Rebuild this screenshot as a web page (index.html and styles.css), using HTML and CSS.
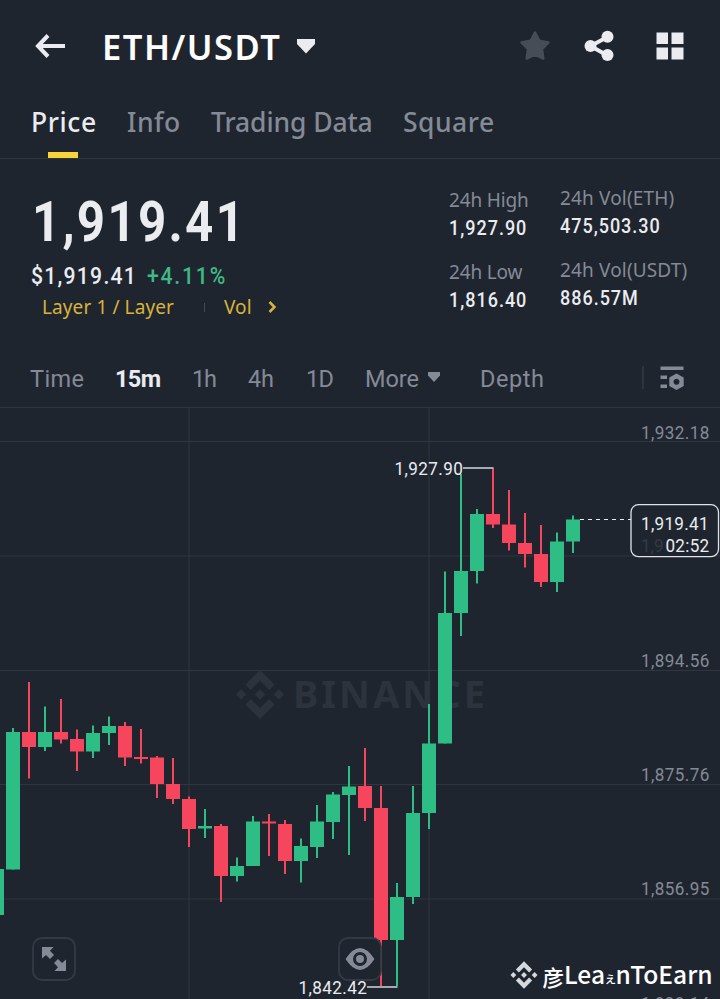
FILE: index.html
```html
<!DOCTYPE html>
<html lang="en">
<head>
<meta charset="utf-8">
<title>ETH/USDT</title>
<link rel="stylesheet" href="styles.css">
</head>
<body>
<header class="topbar">
  <svg class="back" width="32" height="28" viewBox="0 0 32 28"><path d="M14 3.500L4 14l10 10.500M4 14h27" fill="none" stroke="#eaecf2" stroke-width="4"/></svg>
  <h1 class="pair">ETH/USDT</h1>
  <svg class="caret" width="18" height="15" viewBox="0 0 18 15"><path d="M0 0h18v5L9 14.500 0 5z" fill="#eaecf2"/></svg>
  <svg class="star" width="32" height="32" viewBox="0 0 32 32"><path d="M16 2.500l4.300 8.300 9.200 1.600-6.500 6.700 1.300 9.400L16 24.500l-8.300 4 1.300-9.400-6.500-6.700 9.200-1.600z" fill="#474d57" stroke="#474d57" stroke-width="2.500" stroke-linejoin="round"/></svg>
  <svg class="share" width="32" height="32" viewBox="0 0 32 32"><path d="M24.500 7L7.500 16l17 9.500" fill="none" stroke="#eaecf2" stroke-width="4"/><g fill="#eaecf2"><circle cx="24.500" cy="6.800" r="6"/><circle cx="7.500" cy="16" r="6"/><circle cx="24.500" cy="25" r="6"/></g></svg>
  <svg class="apps" width="28" height="28" viewBox="0 0 28 28"><path d="M.5.500H12V12H.500zM15.500.500H27.500V12H15.500zM.500 15.500H12V27.500H.500zM15.500 15.500H27.500V27.500H15.500z" fill="#eaecf2"/></svg>
</header>

<nav class="tabs">
  <a class="tab active t-price">Price</a>
  <a class="tab t-info">Info</a>
  <a class="tab t-data">Trading Data</a>
  <a class="tab t-square">Square</a>
</nav>

<section class="summary">
  <div class="quote">
    <div class="last">1,919.41</div>
    <div class="sub"><span class="usd">$1,919.41</span><span class="chg">+4.11%</span></div>
    <div class="tags">
      <span class="layer">Layer 1 / Layer</span><i class="tag-sep"></i><span class="vol">Vol</span>
      <svg width="9" height="12" viewBox="0 0 9 12"><path d="M1.500 1l5 5-5 5" fill="none" stroke="#d9b23c" stroke-width="2.500"/></svg>
    </div>
  </div>
  <dl class="stats range">
    <div><dt>24h High</dt><dd>1,927.90</dd></div>
    <div><dt>24h Low</dt><dd>1,816.40</dd></div>
  </dl>
  <dl class="stats volume">
    <div><dt>24h Vol(ETH)</dt><dd>475,503.30</dd></div>
    <div><dt>24h Vol(USDT)</dt><dd>886.57M</dd></div>
  </dl>
</section>

<nav class="intervals">
  <svg width="720" height="50" viewBox="0 0 720 50">
    <g class="iv">
      <text x="30" y="29" textLength="54">Time</text>
      <text x="115" y="29" textLength="46" class="on">15m</text>
      <text x="192" y="29" textLength="25">1h</text>
      <text x="248" y="29" textLength="26">4h</text>
      <text x="306" y="29" textLength="28">1D</text>
      <text x="365" y="29" textLength="54">More</text>
      <text x="480" y="29" textLength="64">Depth</text>
    </g>
    <path d="M428 14h12v3.500l-6 6.500-6-6.500z" fill="#848a96"/>
    <path d="M643 8v23" stroke="#343b46" stroke-width="1.500"/>
    <g fill="#848a96"><path d="M660.500 8.500h23v3.500h-23zM660.500 17.500h6.500v3.500h-6.500zM660.500 26.500h6.500v3.500h-6.500z"/><path fill-rule="evenodd" d="M676.500 15.500l7.200 4v8.500l-7.200 4-7.200-4v-8.500zM676.500 20.700a3 3 0 1 0 .01 0z"/></g>
  </svg>
</nav>

<main class="chart">
  <svg id="plot" width="720" height="592" viewBox="0 407 720 592">
    <path class="grid" d="M0 407.500H720M0 441.500H720M0 556H720M0 670.500H720M0 784.500H720M0 899H720M189 407V999M429 407V999"/>
    <g fill="#2c333d">
      <path transform="translate(260 694.500) scale(1.480)" d="M0-16.500L9.800-6.700 6.200-3.100 0-9.300-6.200-3.100-9.800-6.700zM0 16.500L9.800 6.700 6.200 3.100 0 9.300-6.200 3.100-9.800 6.700zM0-3.600L3.600 0 0 3.600-3.600 0zM-12.800-3.500L-9.300 0l-3.500 3.500L-16.300 0zM12.800-3.500L16.300 0l-3.500 3.500L9.300 0z"/>
      <text class="brand" x="293" y="708" textLength="192">BINANCE</text>
    </g>
    <g class="axis">
      <text class="num" x="641" y="439" textLength="76">1,932.18</text>
      <text class="num" x="641" y="667" textLength="76">1,894.56</text>
      <text class="num" x="641" y="781.500" textLength="76">1,875.76</text>
      <text class="num" x="641" y="895.500" textLength="76">1,856.95</text>
      <text class="num" x="641" y="1010" textLength="76">1,838.14</text>
    </g>
    <g id="candles"></g>
    <path d="M463 468H493.500M367 987H397.500" stroke="#a5aab4" stroke-width="2"/>
    <text class="tip num" x="394.500" y="475.500" textLength="76">1,927.90</text>
    <path d="M580 519.500H631" stroke="#eaecef" stroke-width="1.200" stroke-dasharray="4 4"/>
    <rect x="631" y="504.700" width="87.500" height="52" rx="7.500" fill="#1f252f" stroke="#dfe2e8" stroke-width="1.300"/>
    <text class="ghost num" x="641" y="552" textLength="25">1,9</text>
    <text class="tip num" x="641" y="530" textLength="75">1,919.41</text>
    <text class="tip num" x="665.500" y="552" textLength="48.500">02:52</text>
    <g fill="#1f252f" stroke="#343a45" stroke-width="1.800"><rect x="33" y="938" width="42" height="42" rx="9"/><rect x="339" y="938" width="42" height="42" rx="9"/></g>
    <path d="M42 947h11.500l-3.500 3.800 4 4.200-4 4-4-4-4 3.500zM66 971H54.500l3.500-3.800-4-4.200 4-4 4 4 4-3.500z" fill="#848a96"/>
    <path d="M345.500 959q14.500-22 29 0q-14.500 22-29 0z" fill="#848a96"/><circle cx="360" cy="959" r="5.500" fill="#848a96" stroke="#1f252f" stroke-width="3"/>
    <text class="tip num" x="298.500" y="994.500" textLength="76">1,842.42</text>
    <path transform="translate(524 975) scale(.83)" fill="#d5d8dd" d="M0-16.500L9.800-6.700 6.200-3.100 0-9.300-6.200-3.100-9.800-6.700zM0 16.500L9.800 6.700 6.200 3.100 0 9.300-6.200 3.100-9.800 6.700zM0-3.600L3.600 0 0 3.600-3.600 0zM-12.800-3.500L-9.300 0l-3.500 3.500L-16.300 0zM12.800-3.500L16.300 0l-3.500 3.500L9.300 0z"/>
    <g class="author">
      <text x="542.500" y="986" class="cjk">彦</text>
      <text x="564" y="984" textLength="41" lengthAdjust="spacingAndGlyphs">Lea</text>
      <text x="605" y="983.500" class="kana">え</text>
      <text x="615.500" y="984" textLength="97" lengthAdjust="spacingAndGlyphs">nToEarn</text>
    </g>
  </svg>
</main>
<script src="chart.js"></script>
</body>
</html>
```
FILE: styles.css
```css
* { box-sizing: border-box; }
body { margin: 0; width: 720px; height: 999px; overflow: hidden; background: #1f252f; color: #eaecef; font-family: "Noto Sans", sans-serif; }
svg { display: block; flex: none; }
.topbar { display: flex; align-items: center; height: 92px; padding-left: 34px; }
.pair { margin: 2px 0 0 36px; width: 178px; font: 600 34.500px/44px "Noto Sans", sans-serif; color: #fff; letter-spacing: 1.500px; white-space: nowrap; }
.caret { margin-left: 17px; }
.star { margin-left: 204px; }
.share { margin-left: 32px; }
.apps { margin-left: 41px; }
.tabs { display: flex; height: 67px; border-bottom: 1px solid #303640; padding-left: 31px; font-size: 26.500px; font-weight: 500; color: #848a96; }
.tab { position: relative; line-height: 61px; white-space: nowrap; }
.t-price { width: 96px; letter-spacing: .600px; }
.t-info { width: 84px; letter-spacing: .500px; }
.t-data { width: 192px; letter-spacing: -.100px; }
.t-square { letter-spacing: .500px; }
.active { color: #eaecef; }
.active::after { content: ""; position: absolute; left: 17px; top: 60px; width: 30px; height: 6px; background: #f8d33a; }
.summary { display: flex; height: 195px; padding: 26px 0 0 31px; }
.quote { width: 418px; }
.last { padding-left: 1px; font: 700 56px/75px Roboto, sans-serif; letter-spacing: 2.600px; transform: scaleX(.88); transform-origin: 0 0; }
.sub { display: flex; height: 32px; font: 500 23.500px/32px Roboto, sans-serif; }
.usd, .chg { letter-spacing: 1.400px; transform: scaleX(.9); transform-origin: 0 0; }
.usd { width: 116px; }
.chg { color: #3eb986; letter-spacing: 2px; }
.tags { display: flex; align-items: center; padding-left: 11px; height: 30px; font-size: 19px; letter-spacing: .100px; color: #d9b23c; }
.layer { width: 162px; }
.tag-sep { width: 1px; height: 9px; background: #444a55; margin-right: 19px; }
.vol { width: 44px; }
.stats { margin: 0; font-size: 19px; }
.range { width: 111px; padding-top: 1px; }
.range dt { letter-spacing: -.150px; }
.volume { margin-top: -1px; }
.volume dt { letter-spacing: .150px; }
.stats div { height: 72px; }
.stats dt { line-height: 28px; color: #848a96; }
.stats dd { margin: 0; font: 500 20px/29px Roboto, sans-serif; letter-spacing: 1.100px; transform: scaleX(.9); transform-origin: 0 0; }
.intervals { height: 53px; padding-top: 4px; }
.iv { fill: #848a96; font: 400 23.500px Roboto, sans-serif; }
.on { fill: #eaecef; font-weight: 700; }
.chart { height: 592px; }
.grid { stroke: #303640; stroke-width: 1; fill: none; }
.num { font: 400 19px Roboto, sans-serif; transform: scaleX(.9); transform-box: fill-box; transform-origin: 0 0; }
.axis { fill: #848a96; }
.tip { fill: #eaecef; }
.ghost { fill: #343a45; }
.brand { font: 700 38px "Noto Sans", sans-serif; }
.author { fill: #fff; font: 500 24.500px "Noto Sans CJK SC", sans-serif; }
.cjk { font-size: 21.500px; }
.kana { font-size: 11px; }
```
FILE: chart.js
```js
// Each entry: center x, wick top, body top, body bottom, wick bottom, direction
const candles = [
  [-3, 869, 869, 915, 915, "u"],
  [13, 728, 732, 869.5, 869.5, "u"],
  [29, 682, 732, 747, 778.5, "d"],
  [45, 706.5, 732, 747, 751, "u"],
  [61, 699, 732, 739.5, 743.5, "d"],
  [77, 729.5, 739, 751.5, 771, "d"],
  [93, 725.5, 733, 751.5, 758, "u"],
  [109, 716.5, 726, 733, 745, "u"],
  [125, 722, 726, 757.5, 766, "d"],
  [141, 729, 757, 759, 763.5, "d"],
  [157, 756, 757.5, 784, 798, "d"],
  [173, 758, 784, 799, 804, "d"],
  [189, 796.5, 799, 829, 847, "d"],
  [205, 809, 826, 828.5, 838, "u"],
  [221, 824, 826, 876, 902, "d"],
  [237, 857.5, 866, 876, 881.5, "u"],
  [253, 816, 821.5, 866, 866, "u"],
  [269, 814, 821.5, 823.5, 856, "d"],
  [285, 820, 824, 861, 874, "d"],
  [301, 838.5, 846, 861, 882.5, "u"],
  [317, 805, 821.5, 847, 858, "u"],
  [333, 792, 794.5, 822, 839, "u"],
  [349, 766, 786.5, 795, 855, "u"],
  [365, 748, 786, 808, 821, "d"],
  [381, 786, 808, 940, 986, "d"],
  [397, 883, 897, 940, 986, "u"],
  [413, 786, 813, 897, 904, "u"],
  [429, 704, 743.5, 813, 829, "u"],
  [445, 571.5, 613, 743.5, 743.5, "u"],
  [461, 474, 571, 613, 636, "u"],
  [477, 509, 514, 571, 583.5, "u"],
  [493, 468, 514, 524.5, 528, "d"],
  [509, 490, 524.5, 543, 550.5, "d"],
  [525, 513, 543, 554, 567.5, "d"],
  [541, 525, 554, 582, 587, "d"],
  [557, 532.5, 541.5, 582, 592, "u"],
  [573, 515.5, 519.5, 541.5, 553, "u"]
];
const colors = { u: "#2ebd85", d: "#f6465d" };
document.getElementById("candles").innerHTML = candles.map(([x, wt, bt, bb, wb, dir]) =>
  `<g fill="${colors[dir]}"><rect x="${x - 1}" y="${wt}" width="2" height="${wb - wt}"/><rect x="${x - 7}" y="${bt}" width="14" height="${bb - bt}"/></g>`
).join("");
```
